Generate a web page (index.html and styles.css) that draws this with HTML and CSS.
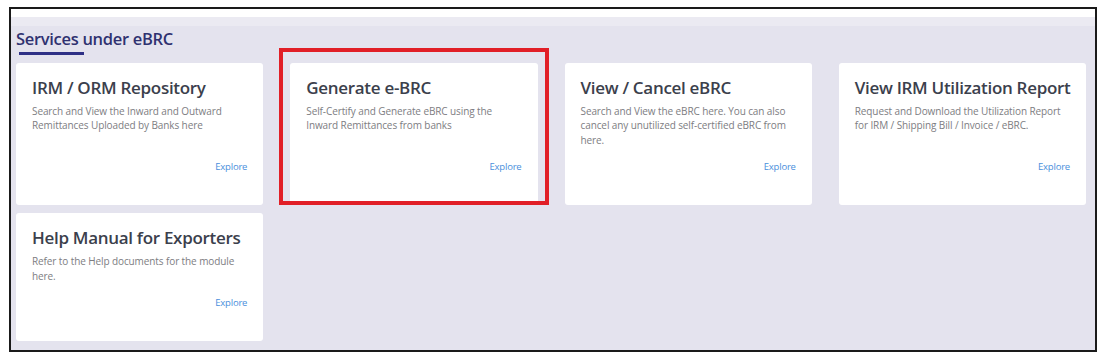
FILE: index.html
```html
<!DOCTYPE html>
<html lang="en">
<head>
  <meta charset="UTF-8">
  <title>Services under eBRC</title>
  <link rel="stylesheet" href="styles.css">
</head>
<body>
  <div class="frame">
    <div class="top-strip"></div>
    <div class="services">
      <h2 class="section-title">Services under eBRC</h2>

      <div class="card-grid">
        <div class="card">
          <h3>IRM / ORM Repository</h3>
          <p>Search and View the Inward and Outward Remittances Uploaded by Banks here</p>
          <a class="explore" href="#">Explore</a>
        </div>

        <div class="card highlight">
          <h3>Generate e-BRC</h3>
          <p>Self-Certify and Generate eBRC using the Inward Remittances from banks</p>
          <a class="explore" href="#">Explore</a>
        </div>

        <div class="card">
          <h3>View / Cancel eBRC</h3>
          <p>Search and View the eBRC here. You can also cancel any unutilized self-certified eBRC from here.</p>
          <a class="explore" href="#">Explore</a>
        </div>

        <div class="card">
          <h3>View IRM Utilization Report</h3>
          <p>Request and Download the Utilization Report for IRM / Shipping Bill / Invoice / eBRC.</p>
          <a class="explore" href="#">Explore</a>
        </div>

        <div class="card">
          <h3>Help Manual for Exporters</h3>
          <p>Refer to the Help documents for the module here.</p>
          <a class="explore" href="#">Explore</a>
        </div>
      </div>
    </div>
  </div>
</body>
</html>
```

FILE: styles.css
```css
* {
  box-sizing: border-box;
  margin: 0;
  padding: 0;
}

body {
  font-family: "Open Sans", "Noto Sans", sans-serif;
  background: #fff;
  padding: 7px 0 0 9px;
  height: 359px;
  overflow: hidden;
}

.frame {
  width: 1088px;
  height: 345px;
  border: 2px solid #1a1a1a;
  background: #e4e3ee;
  overflow: hidden;
}

.top-strip {
  height: 17px;
  background: #fff;
  border-bottom: 9px solid #ebeaf2;
}

.services {
  padding: 0 0 0 5px;
}

.section-title {
  font-size: 16.5px;
  line-height: 24px;
  font-weight: 600;
  letter-spacing: -0.3px;
  color: #2f3170;
  padding-top: 1px;
}

.section-title::after {
  content: "";
  display: block;
  width: 65px;
  height: 2.5px;
  margin: 1px 0 0 3px;
  background: #2e3086;
}

.card-grid {
  width: 1070px;
  margin-top: 8px;
  display: grid;
  grid-template-columns: repeat(4, minmax(0, 1fr));
  column-gap: 27px;
  row-gap: 8px;
}

.card {
  position: relative;
  background: #fff;
  border-radius: 3px;
  padding: 12px 16px 31px;
  display: flex;
  flex-direction: column;
}

.card h3 {
  font-size: 17px;
  line-height: 26px;
  font-weight: 600;
  letter-spacing: -0.3px;
  color: #3b404c;
  white-space: nowrap;
}

.card p {
  margin-top: 3px;
  font-size: 10px;
  line-height: 14.5px;
  letter-spacing: -0.1px;
  color: #7d7d82;
}

.explore {
  margin-top: auto;
  padding-top: 13px;
  align-self: flex-end;
  font-size: 9.5px;
  line-height: 14px;
  letter-spacing: -0.2px;
  color: #4a8fdc;
  text-decoration: none;
}

.highlight::after {
  content: "";
  position: absolute;
  top: -15px;
  left: -11px;
  right: -11px;
  bottom: 0;
  border: 4px solid #e11f27;
  pointer-events: none;
}
```
